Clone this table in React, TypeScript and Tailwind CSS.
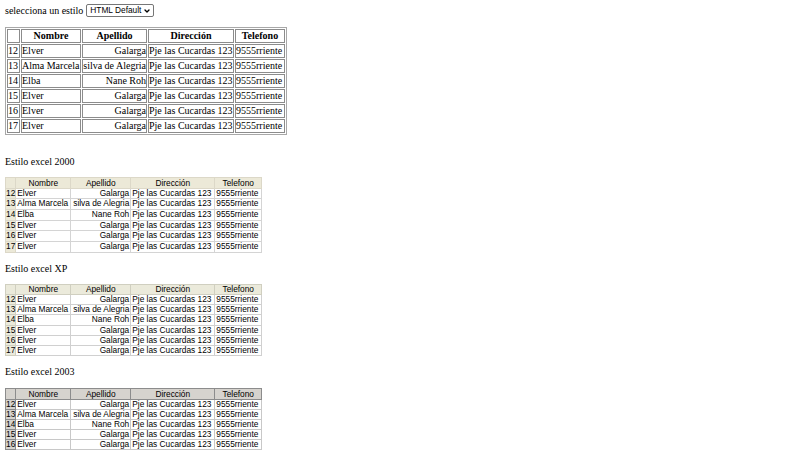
import { ChevronDown } from "lucide-react";

interface Row {
  n: number;
  nombre: string;
  apellido: string;
  direccion: string;
  telefono: string;
}

const rows: Row[] = [
  { n: 12, nombre: "Elver", apellido: "Galarga", direccion: "Pje las Cucardas 123", telefono: "9555rriente" },
  { n: 13, nombre: "Alma Marcela", apellido: "silva de Alegria", direccion: "Pje las Cucardas 123", telefono: "9555rriente" },
  { n: 14, nombre: "Elba", apellido: "Nane Roh", direccion: "Pje las Cucardas 123", telefono: "9555rriente" },
  { n: 15, nombre: "Elver", apellido: "Galarga", direccion: "Pje las Cucardas 123", telefono: "9555rriente" },
  { n: 16, nombre: "Elver", apellido: "Galarga", direccion: "Pje las Cucardas 123", telefono: "9555rriente" },
  { n: 17, nombre: "Elver", apellido: "Galarga", direccion: "Pje las Cucardas 123", telefono: "9555rriente" },
];

const heads = ["Nombre", "Apellido", "Dirección", "Telefono"];

function HtmlTable() {
  const td = "border border-[#8c8c8c] px-0 py-0 leading-[12px] h-[14px] whitespace-nowrap";
  return (
    <table className="border border-[#a8a8a8] border-separate border-spacing-[1px] bg-white">
      <thead>
        <tr>
          <th className={`${td} w-[13px]`}></th>
          <th className={`${td} w-[60px] font-bold text-center`}>Nombre</th>
          <th className={`${td} w-[65px] font-bold text-center`}>Apellido</th>
          <th className={`${td} w-[86px] font-bold text-center`}>Dirección</th>
          <th className={`${td} w-[50px] font-bold text-center`}>Telefono</th>
        </tr>
      </thead>
      <tbody>
        {rows.map((r) => (
          <tr key={r.n}>
            <td className={td}>{r.n}</td>
            <td className={td}>{r.nombre}</td>
            <td className={`${td} text-right`}>{r.apellido}</td>
            <td className={td}>{r.direccion}</td>
            <td className={td}>{r.telefono}</td>
          </tr>
        ))}
      </tbody>
    </table>
  );
}

interface ExcelProps {
  headBg: string;
  headBorder: string;
  cellBorder: string;
  headLeading: string;
  rowLeading: string;
}

function ExcelTable({ headBg, headBorder, cellBorder, headLeading, rowLeading }: ExcelProps) {
  const base = "px-0 py-0 whitespace-nowrap font-normal";
  return (
    <table className="border-collapse font-['Liberation_Sans',Arial,sans-serif] text-[8.33px] text-black">
      <thead>
        <tr>
          <th className={`${base} ${headBg} border ${headBorder} ${headLeading} w-[10px]`}></th>
          {heads.map((h, i) => (
            <th
              key={h}
              className={`${base} ${headBg} border ${headBorder} ${headLeading} text-center ${
                ["w-[55px]", "w-[60px]", "w-[84px]", "w-[47px]"][i]
              }`}
            >
              {h}
            </th>
          ))}
        </tr>
      </thead>
      <tbody>
        {rows.map((r) => (
          <tr key={r.n}>
            <td className={`${base} ${headBg} border ${headBorder} ${rowLeading} text-left`}>{r.n}</td>
            <td className={`${base} border ${cellBorder} ${rowLeading} pl-[1px]`}>{r.nombre}</td>
            <td className={`${base} border ${cellBorder} ${rowLeading} text-right pr-[1px]`}>{r.apellido}</td>
            <td className={`${base} border ${cellBorder} ${rowLeading} pl-[1px]`}>{r.direccion}</td>
            <td className={`${base} border ${cellBorder} ${rowLeading} pl-[1px]`}>{r.telefono}</td>
          </tr>
        ))}
      </tbody>
    </table>
  );
}

export default function App() {
  return (
    <div className="min-h-[450px] bg-white px-[5px] pt-[4px] font-['Liberation_Serif','Times_New_Roman',serif] text-[10px] leading-[11.5px] text-black">
      <div className="flex items-center gap-[3px]">
        <span>selecciona un estilo</span>
        <div className="flex h-[13px] items-center gap-[2px] rounded-[2px] border border-[#767676] bg-white pl-[3px] pr-[2px] font-['Liberation_Sans',Arial,sans-serif] text-[8.33px] leading-none">
          <span>HTML Default</span>
          <ChevronDown className="h-[8px] w-[8px]" strokeWidth={4} />
        </div>
      </div>

      <div className="mt-[10px]">
        <HtmlTable />
      </div>

      <p className="mt-[21px] mb-[9px]">Estilo excel 2000</p>
      <ExcelTable
        headBg="bg-[#ece9d8]"
        headBorder="border-[#dcd8c8]"
        cellBorder="border-[#d4d4d4]"
        headLeading="leading-[10px]"
        rowLeading="leading-[9.67px]"
      />

      <p className="my-[10px]">Estilo excel XP</p>
      <ExcelTable
        headBg="bg-[#ebeadb]"
        headBorder="border-[#d0cfc0]"
        cellBorder="border-[#d0d0d0]"
        headLeading="leading-[9px]"
        rowLeading="leading-[9.2px]"
      />

      <p className="my-[10px]">Estilo excel 2003</p>
      <ExcelTable
        headBg="bg-[#d6d3ce]"
        headBorder="border-[#8c8c8c]"
        cellBorder="border-[#c8c8c8]"
        headLeading="leading-[10px]"
        rowLeading="leading-[9px]"
      />
    </div>
  );
}
